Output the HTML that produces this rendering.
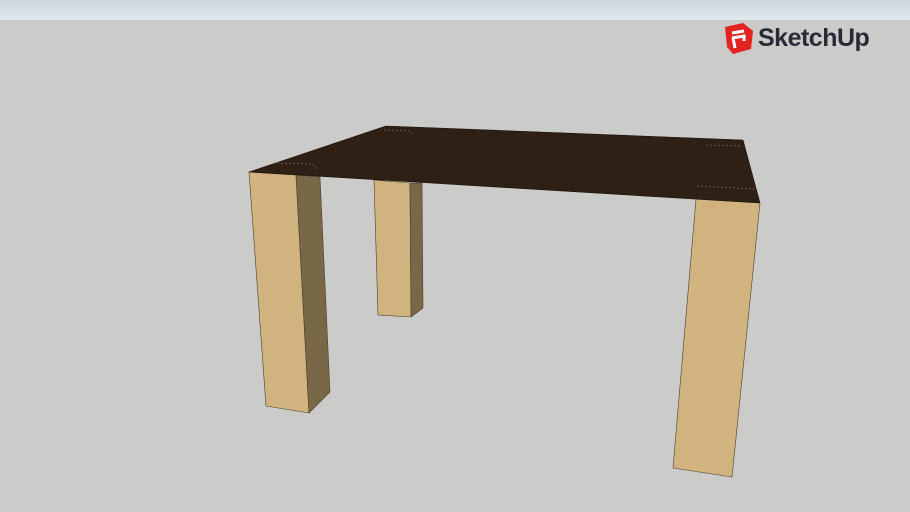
<!DOCTYPE html>
<html><head><style>
body{margin:0;width:910px;height:512px;overflow:hidden;background:#cbcbc9;position:relative;font-family:"Liberation Sans",sans-serif}
.top{position:absolute;left:0;top:0;width:910px;height:20px;background:linear-gradient(#c9d6df,#e3e9ec)}
.logo{position:absolute;left:758px;top:24px;font-weight:bold;font-size:25px;color:#2a2a36;letter-spacing:-0.5px}
</style></head><body>
<div class="top"></div>
<svg width="910" height="512" style="position:absolute;left:0;top:0">
<g stroke="#4a3f2c" stroke-width="0.6" stroke-linejoin="round">
<polygon points="374,180 410,183 411,317 378,315" fill="#d0b37e"/>
<polygon points="410,183 422,183 423,308 411,317" fill="#786848"/>
<polygon points="249,172 296,175 309,413 266,406" fill="#d0b37e"/>
<polygon points="296,175 320,177 330,392 309,413" fill="#786848"/>
<polygon points="696,199 760,203 732,477 673,468" fill="#d0b37e"/>
<polygon points="249,172 386,126 743,140 760,203" fill="#2e2014" stroke="#1a120a"/>
</g>
<g stroke="#8a7a60" stroke-width="0.6" stroke-dasharray="2,2" fill="none">
<path d="M273,163 L313,164 L318,170"/><path d="M384,130 L410,131 L414,135"/>
<path d="M706,145 L742,146"/><path d="M697,186 L755,189"/>
</g>
<g transform="translate(725,23)">
<polygon points="0,4 18,0 28,8 26,26 8,31 2,24" fill="#e2231f"/>
<path d="M7,10 L19,8 M7,15 L19,13 L19,18 M8,15 L10,25" stroke="#fff" stroke-width="3" fill="none"/>
</g>
</svg>
<div class="logo">SketchUp</div>
</body></html>
